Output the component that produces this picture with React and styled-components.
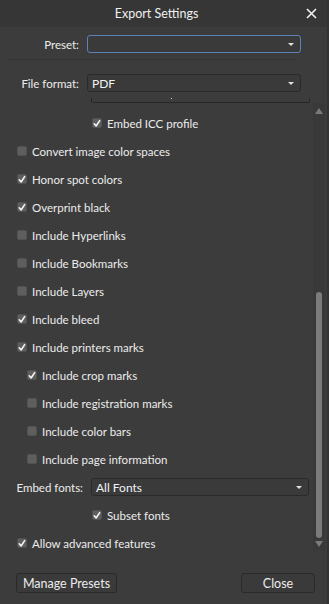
import React from "react";
import styled, { createGlobalStyle } from "styled-components";

const GlobalStyle = createGlobalStyle`
  html, body {
    margin: 0;
    padding: 0;
    background: #3c3c3c;
  }
  * {
    box-sizing: border-box;
  }
`;

const rows = [
  { label: "Embed ICC profile", checked: true, indent: 92 },
  { label: "Convert image color spaces", checked: false, indent: 17 },
  { label: "Honor spot colors", checked: true, indent: 17 },
  { label: "Overprint black", checked: true, indent: 17 },
  { label: "Include Hyperlinks", checked: false, indent: 17 },
  { label: "Include Bookmarks", checked: false, indent: 17 },
  { label: "Include Layers", checked: false, indent: 17 },
  { label: "Include bleed", checked: true, indent: 17 },
  { label: "Include printers marks", checked: true, indent: 17 },
  { label: "Include crop marks", checked: true, indent: 27 },
  { label: "Include registration marks", checked: false, indent: 27 },
  { label: "Include color bars", checked: false, indent: 27 },
  { label: "Include page information", checked: false, indent: 27 },
];

function Check({ checked }) {
  return (
    <Box>
      {checked ? (
        <svg width="9" height="9" viewBox="0 0 9 9">
          <path d="M1.4 4.8 L3.5 7.3 L7.5 1.3" stroke="#f4f4f4" strokeWidth="1.8" fill="none" strokeLinecap="round" strokeLinejoin="round" />
        </svg>
      ) : null}
    </Box>
  );
}

function CheckRow({ label, checked, indent }) {
  return (
    <Row indent={indent}>
      <Check checked={checked} />
      <RowText>{label}</RowText>
    </Row>
  );
}

export default function App() {
  return (
    <Dialog>
      <GlobalStyle />
      <TitleBar>
        <span />
        <Title>Export Settings</Title>
        <CloseX>
          <svg width="11" height="11" viewBox="0 0 11 11">
            <path d="M1 1 L10 10 M10 1 L1 10" stroke="#f0f0f0" strokeWidth="1.6" />
          </svg>
        </CloseX>
      </TitleBar>

      <FieldRow top={8} labelWidth={71} pad={8}>
        <Label>Preset:</Label>
        <Select focused width={214}>
          <span />
          <Caret />
        </Select>
      </FieldRow>

      <Separator />

      <FieldRow top={14} labelWidth={71} pad={8}>
        <Label>File format:</Label>
        <Select width={214}>
          <SelectText>PDF</SelectText>
          <Caret />
        </Select>
      </FieldRow>

      <ClippedPanel>
        <Dot />
      </ClippedPanel>

      <ScrollArea>
        <ScrollContent>
          {rows.map((r) => (
            <CheckRow key={r.label} {...r} />
          ))}
          <FieldRow top={0} labelWidth={67} pad={16} tall>
            <Label>Embed fonts:</Label>
            <Select width={218}>
              <SelectText>All Fonts</SelectText>
              <Caret />
            </Select>
          </FieldRow>
          <CheckRow label="Subset fonts" checked indent={92} />
          <CheckRow label="Allow advanced features" checked indent={17} />
        </ScrollContent>
        <ScrollBar>
          <Arrow up />
          <Track>
            <Thumb />
          </Track>
          <Arrow />
        </ScrollBar>
      </ScrollArea>

      <Footer>
        <Button width={101}>Manage Presets</Button>
        <Button width={74}>Close</Button>
      </Footer>
    </Dialog>
  );
}

const Dialog = styled.div`
  width: 329px;
  height: 604px;
  background: #3c3c3c;
  display: flex;
  flex-direction: column;
  font-family: Lato, "Noto Sans", sans-serif;
  font-size: 11.5px;
  color: #ececec;
  border-right: 2px solid #333333;
`;

const TitleBar = styled.div`
  height: 27px;
  background: #363636;
  display: grid;
  grid-template-columns: 1fr auto 1fr;
  align-items: center;
`;

const Title = styled.div`
  font-size: 12.5px;
  color: #f0f0f0;
  padding-right: 14px;
`;

const CloseX = styled.div`
  justify-self: end;
  margin-right: 10px;
  display: flex;
`;

const FieldRow = styled.div`
  display: flex;
  align-items: center;
  gap: 8px;
  margin-top: ${(p) => p.top}px;
  padding-left: ${(p) => p.pad}px;
  height: ${(p) => (p.tall ? "28px" : "auto")};

  & > div:first-child {
    width: ${(p) => p.labelWidth}px;
  }
`;

const Label = styled.div`
  text-align: right;
  color: #ececec;
  white-space: nowrap;
`;

const Select = styled.div`
  width: ${(p) => p.width}px;
  height: 18px;
  border: 1px solid ${(p) => (p.focused ? "#5d82bb" : "#2a2a2a")};
  border-radius: 3px;
  background: #3a3a3a;
  display: flex;
  align-items: center;
  justify-content: space-between;
  padding: 0 6px 0 4px;
`;

const SelectText = styled.span`
  color: #f2f2f2;
  font-size: 12px;
`;

const Caret = styled.span`
  width: 0;
  height: 0;
  border-left: 3.5px solid transparent;
  border-right: 3.5px solid transparent;
  border-top: 3px solid #e0e0e0;
`;

const Separator = styled.div`
  height: 1px;
  background: #323232;
  margin: 6px 31px 0 8px;
`;

const ClippedPanel = styled.div`
  position: relative;
  height: 5px;
  margin: 6px 0 0 91px;
  width: 219px;
  border: 1px solid #262626;
  border-top: none;
  border-radius: 0 0 2px 2px;
`;

const Dot = styled.span`
  position: absolute;
  left: 79px;
  top: 0;
  width: 1px;
  height: 1px;
  background: #d0d0d0;
`;

const ScrollArea = styled.div`
  display: flex;
  height: 454px;
`;

const ScrollContent = styled.div`
  flex: 1;
  padding-top: 6px;
  display: flex;
  flex-direction: column;
`;

const Row = styled.div`
  height: 28px;
  display: flex;
  align-items: center;
  gap: 5px;
  padding-left: ${(p) => p.indent}px;
`;

const Box = styled.div`
  width: 10px;
  height: 10px;
  border-radius: 2px;
  background: #5e5e5e;
  border: 1px solid #525252;
  display: flex;
  align-items: center;
  justify-content: center;
`;

const RowText = styled.span`
  color: #ececec;
  white-space: nowrap;
`;

const ScrollBar = styled.div`
  width: 12px;
  margin-right: 2px;
  display: flex;
  flex-direction: column;
  align-items: center;
  padding-top: 2px;
  background: #393939;
  height: 447px;
`;

const Arrow = styled.span`
  width: 0;
  height: 0;
  margin: 3px 0;
  border-left: 4px solid transparent;
  border-right: 4px solid transparent;
  ${(p) => (p.up ? "border-bottom: 6px solid #7a7a7a;" : "border-top: 6px solid #7a7a7a;")}
`;

const Track = styled.div`
  flex: 1;
  width: 100%;
  display: flex;
  flex-direction: column;
  justify-content: flex-end;
  align-items: center;
`;

const Thumb = styled.div`
  width: 6px;
  height: 246px;
  border-radius: 3px;
  background: #7b7b7b;
`;

const Footer = styled.div`
  display: flex;
  justify-content: space-between;
  padding: 0 12px 0 16px;
  margin-top: 16px;
`;

const Button = styled.div`
  width: ${(p) => p.width}px;
  height: 20px;
  border: 1px solid #2a2a2a;
  border-radius: 3px;
  background: #3a3a3a;
  display: flex;
  align-items: center;
  justify-content: center;
  font-size: 12.5px;
  color: #ececec;
`;
